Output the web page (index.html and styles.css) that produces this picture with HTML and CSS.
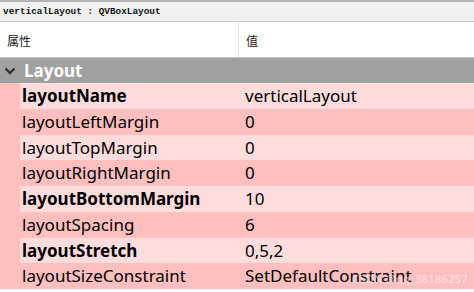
FILE: index.html
```html
<!DOCTYPE html>
<html lang="zh">
<head>
  <meta charset="UTF-8">
  <title>Property Editor</title>
  <link rel="stylesheet" href="styles.css">
</head>
<body>
  <div class="objbar">verticalLayout : QVBoxLayout</div>
  <div class="head">
    <div class="hcell">属性</div>
    <div class="hcell val">值</div>
  </div>
  <div class="group">
    <svg class="chev" width="12" height="10" viewBox="0 0 12 10"><path d="M1.5 2.5 L6 7 L10.5 2.5" fill="none" stroke="#333" stroke-width="2.4"/></svg>
    <span>Layout</span>
  </div>
  <div class="rows">
    <div class="row light"><div class="name bold">layoutName</div><div class="value">verticalLayout</div></div>
    <div class="row dark"><div class="name">layoutLeftMargin</div><div class="value">0</div></div>
    <div class="row light"><div class="name">layoutTopMargin</div><div class="value">0</div></div>
    <div class="row dark"><div class="name">layoutRightMargin</div><div class="value">0</div></div>
    <div class="row light"><div class="name bold">layoutBottomMargin</div><div class="value">10</div></div>
    <div class="row dark"><div class="name">layoutSpacing</div><div class="value">6</div></div>
    <div class="row light"><div class="name bold">layoutStretch</div><div class="value">0,5,2</div></div>
    <div class="row dark"><div class="name">layoutSizeConstraint</div><div class="value">SetDefaultConstraint</div></div>
  </div>
  <div class="mark">CSDN @qq_38186257</div>
</body>
</html>
```

FILE: styles.css
```css
body {
  margin:0; width:474px; height:292px; overflow:hidden; position:relative;
  background:#fff; font-family:"Noto Sans", "Noto Sans CJK SC", sans-serif;
  color:#000;
}
.objbar {
  height:19px; border-top:2px solid #b4b4b4; border-bottom:1px solid #c8c8c8;
  background:#f0f0f0; font-family:"Liberation Mono", monospace; font-size:9.4px;
  font-weight:bold; line-height:19px; padding-left:3px; color:#111;
}
.head {
  display:flex; height:35px; border-bottom:1px solid #c4c4c4;
}
.hcell {
  width:231px; padding-left:7px; font-family:"Noto Sans CJK SC", sans-serif;
  font-size:12px; line-height:37px; color:#222;
}
.hcell.val { flex:1; border-left:1px solid #e0e0e0; }
.group {
  height:25px; background:#a0a0a0; display:flex; align-items:center;
  color:#fff; font-weight:bold; font-size:17px;
}
.chev { margin:0 8px 0 4px; }
.rows { display:flex; flex-direction:column; }
.row { display:flex; height:25.75px; background:#ffbfbf; font-size:17px; }
.name { width:218px; margin-left:20px; padding-left:2px; line-height:25px; }
.value { flex:1; padding-left:5px; line-height:25px; }
.row.light .name, .row.light .value { background:#ffdcdc; }
.bold { font-weight:bold; }
.mark {
  position:absolute; right:6px; bottom:6px; font-size:11px;
  color:rgba(255,255,255,0.6); letter-spacing:0.3px;
}
```
